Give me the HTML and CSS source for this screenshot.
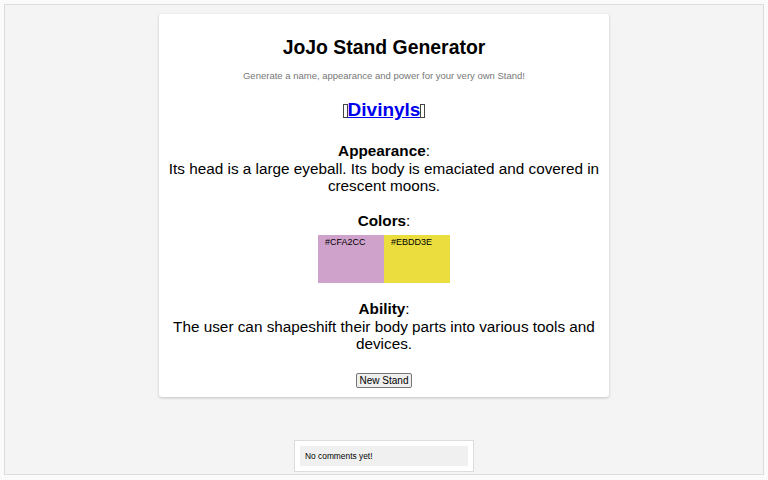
FILE: index.html
```html
<!DOCTYPE html>
<html lang="en">
<head>
    <meta charset="UTF-8">
    <meta name="viewport" content="width=device-width, initial-scale=1.0">
    <title>JoJo Stand Generator</title>
    <link rel="stylesheet" href="styles.css">
</head>
<body>
    <div class="frame">
        <div class="card">
            <h1>JoJo Stand Generator</h1>
            <p class="subtitle">Generate a name, appearance and power for your very own Stand!</p>

            <h2 class="stand-name"><span class="tofu"></span><a href="#">Divinyls</a><span class="tofu"></span></h2>

            <p class="section"><b>Appearance</b>:<br>Its head is a large eyeball. Its body is emaciated and covered in crescent moons.</p>

            <p class="section colors-label"><b>Colors</b>:</p>
            <div class="swatches">
                <div class="swatch" style="background-color: #CFA2CC;">#CFA2CC</div>
                <div class="swatch" style="background-color: #EBDD3E;">#EBDD3E</div>
            </div>

            <p class="section"><b>Ability</b>:<br>The user can shapeshift their body parts into various tools and devices.</p>

            <button class="new-stand" type="button">New Stand</button>
        </div>

        <!-- comments -->
        <div class="comments">
            <div class="comment-empty">No comments yet!</div>
        </div>
    </div>
</body>
</html>
```

FILE: styles.css
```css
body {
    font-family: "Liberation Sans", Arial, sans-serif;
    margin: 0;
    padding: 4px;
    background-color: #fafafa;
}
.frame {
    height: 471px;
    overflow: hidden;
    border: 1px solid #ddd;
    background-color: #f4f4f4;
    padding-top: 9px;
    box-sizing: border-box;
}
.card {
    width: 450px;
    margin: 0 auto;
    background: #fff;
    padding: 10px 8px 9px;
    box-sizing: border-box;
    border-radius: 3px;
    box-shadow: 0 1px 3px rgba(0, 0, 0, 0.2);
    text-align: center;
    color: #000;
}
h1 {
    font-size: 19.4px;
    line-height: 23px;
    margin: 12px 0 11px;
}
.subtitle {
    font-size: 9.5px;
    line-height: 12px;
    color: #777;
    margin: 0;
}
.stand-name {
    font-size: 19px;
    line-height: 22px;
    margin: 17px 0 21px;
}
.stand-name a {
    color: #0000ee;
}
.tofu {
    display: inline-block;
    width: 3px;
    height: 12px;
    border: 1px solid #444;
    vertical-align: -2px;
}
.section {
    font-size: 15.3px;
    line-height: 17.5px;
    margin: 0 0 17px;
}
.colors-label {
    margin-bottom: 6px;
}
.swatches {
    display: flex;
    justify-content: center;
    margin-bottom: 17px;
}
.swatch {
    width: 66px;
    height: 48px;
    font-size: 9px;
    text-align: left;
    padding: 2px 7px;
    box-sizing: border-box;
}
.new-stand {
    font-family: "Liberation Sans", Arial, sans-serif;
    font-size: 10px;
    padding: 1px 3px;
    margin-top: 3px;
    border: 1px solid #767676;
    border-radius: 2px;
    background-color: #efefef;
    color: #000;
}
.comments {
    width: 180px;
    margin: 43px auto 0;
    background: #fff;
    border: 1px solid #ddd;
    padding: 5px;
    box-sizing: border-box;
}
.comment-empty {
    background-color: #f0f0f0;
    font-size: 8.4px;
    padding: 5px 5px;
    text-align: left;
}
```
